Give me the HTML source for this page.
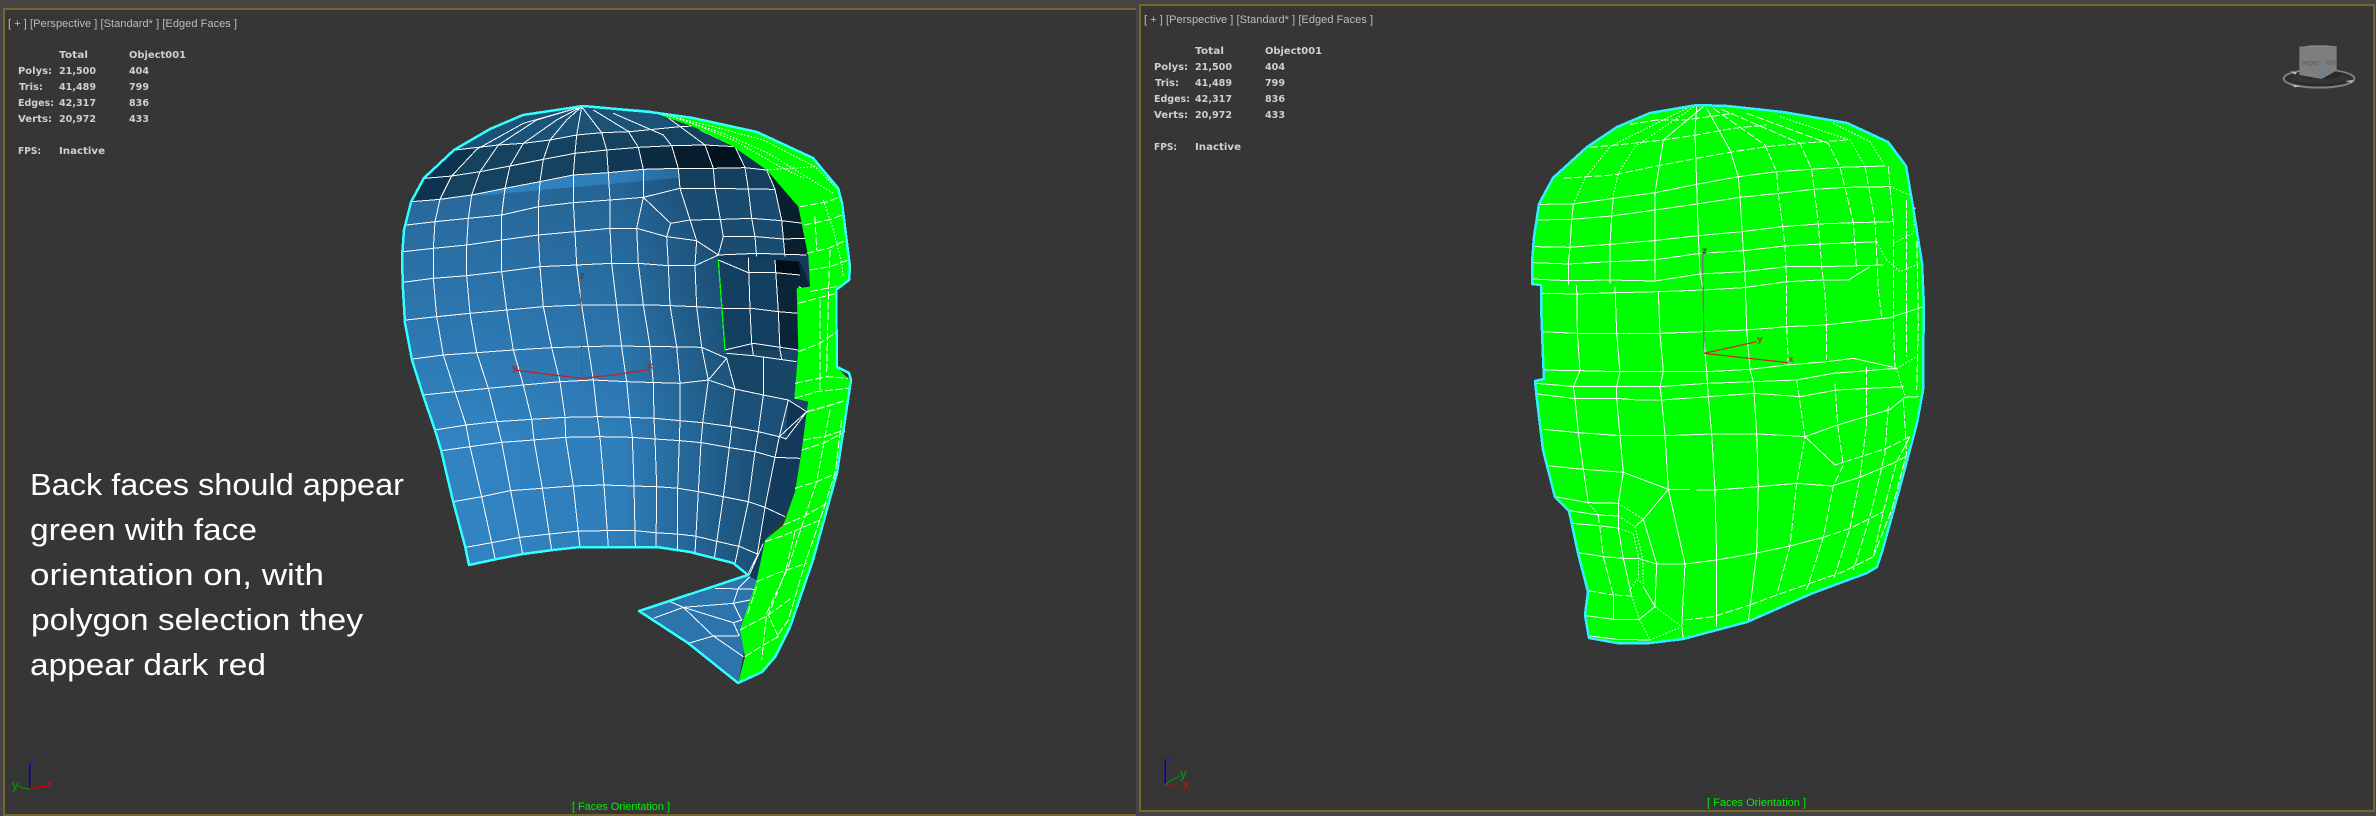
<!DOCTYPE html>
<html><head><meta charset="utf-8"><title>Face orientation</title>
<style>
html,body{margin:0;padding:0;background:#444;width:2376px;height:816px;overflow:hidden}
svg{display:block}
.h{font:11px "Liberation Sans",sans-serif;fill:#bdbdbd}
.s{font:bold 10px "DejaVu Sans",sans-serif;fill:#cfcfcf}
.a{font:31px "Liberation Sans",sans-serif;fill:#fff}
.g{font:11px "Liberation Sans",sans-serif;fill:#00f000}
.m polyline,.md polyline,.mt polyline{fill:none;stroke:#fff;stroke-width:3;shape-rendering:crispEdges}
.md polyline{stroke-dasharray:24 7}
.mt polyline{stroke-dasharray:5 5;stroke-width:3}
.t{font:bold 26px "DejaVu Sans",sans-serif}
.c{font:13px "Liberation Sans",sans-serif}
</style></head><body>
<svg width="2376" height="816" viewBox="0 0 2376 816" xmlns="http://www.w3.org/2000/svg">
<defs>
<linearGradient id="b1" gradientUnits="userSpaceOnUse" x1="300" y1="0" x2="1260" y2="0">
<stop offset="0" stop-color="#3183c2"/><stop offset=".45" stop-color="#2e7db9"/><stop offset=".72" stop-color="#215f8d"/><stop offset="1" stop-color="#15405f"/>
</linearGradient>
<linearGradient id="b2" gradientUnits="userSpaceOnUse" x1="0" y1="240" x2="0" y2="1050">
<stop offset="0" stop-color="#000" stop-opacity=".22"/><stop offset="1" stop-color="#000" stop-opacity="0"/>
</linearGradient>
</defs>
<rect width="2376" height="816" fill="#444"/>
<!-- left viewport -->
<rect x="3" y="8" width="1133" height="808" fill="#75652f"/>
<rect x="5" y="10" width="1131" height="804" fill="#363636"/>
<!-- right viewport -->
<rect x="1139" y="4" width="1236" height="808" fill="#75652f"/>
<rect x="1141" y="6" width="1232" height="804" fill="#363636"/>

<text class="h" x="8" y="27" textLength="229" lengthAdjust="spacing">[ + ] [Perspective ] [Standard* ] [Edged Faces ]</text>
<text class="h" x="1144" y="23" textLength="229" lengthAdjust="spacing">[ + ] [Perspective ] [Standard* ] [Edged Faces ]</text>

<g class="s">
<text x="59" y="58" textLength="29" lengthAdjust="spacingAndGlyphs">Total</text><text x="129" y="58" textLength="57" lengthAdjust="spacingAndGlyphs">Object001</text>
<text x="18" y="74" textLength="34" lengthAdjust="spacingAndGlyphs">Polys:</text><text x="59" y="74" textLength="37" lengthAdjust="spacingAndGlyphs">21,500</text><text x="129" y="74" textLength="20" lengthAdjust="spacingAndGlyphs">404</text>
<text x="19" y="90" textLength="24" lengthAdjust="spacingAndGlyphs">Tris:</text><text x="59" y="90" textLength="37" lengthAdjust="spacingAndGlyphs">41,489</text><text x="129" y="90" textLength="20" lengthAdjust="spacingAndGlyphs">799</text>
<text x="18" y="106" textLength="36" lengthAdjust="spacingAndGlyphs">Edges:</text><text x="59" y="106" textLength="37" lengthAdjust="spacingAndGlyphs">42,317</text><text x="129" y="106" textLength="20" lengthAdjust="spacingAndGlyphs">836</text>
<text x="18" y="122" textLength="34" lengthAdjust="spacingAndGlyphs">Verts:</text><text x="59" y="122" textLength="37" lengthAdjust="spacingAndGlyphs">20,972</text><text x="129" y="122" textLength="20" lengthAdjust="spacingAndGlyphs">433</text>
<text x="18" y="154" textLength="23" lengthAdjust="spacingAndGlyphs">FPS:</text><text x="59" y="154" textLength="46" lengthAdjust="spacingAndGlyphs">Inactive</text>
</g>
<g class="s" transform="translate(1136,-4)">
<text x="59" y="58" textLength="29" lengthAdjust="spacingAndGlyphs">Total</text><text x="129" y="58" textLength="57" lengthAdjust="spacingAndGlyphs">Object001</text>
<text x="18" y="74" textLength="34" lengthAdjust="spacingAndGlyphs">Polys:</text><text x="59" y="74" textLength="37" lengthAdjust="spacingAndGlyphs">21,500</text><text x="129" y="74" textLength="20" lengthAdjust="spacingAndGlyphs">404</text>
<text x="19" y="90" textLength="24" lengthAdjust="spacingAndGlyphs">Tris:</text><text x="59" y="90" textLength="37" lengthAdjust="spacingAndGlyphs">41,489</text><text x="129" y="90" textLength="20" lengthAdjust="spacingAndGlyphs">799</text>
<text x="18" y="106" textLength="36" lengthAdjust="spacingAndGlyphs">Edges:</text><text x="59" y="106" textLength="37" lengthAdjust="spacingAndGlyphs">42,317</text><text x="129" y="106" textLength="20" lengthAdjust="spacingAndGlyphs">836</text>
<text x="18" y="122" textLength="34" lengthAdjust="spacingAndGlyphs">Verts:</text><text x="59" y="122" textLength="37" lengthAdjust="spacingAndGlyphs">20,972</text><text x="129" y="122" textLength="20" lengthAdjust="spacingAndGlyphs">433</text>
<text x="18" y="154" textLength="23" lengthAdjust="spacingAndGlyphs">FPS:</text><text x="59" y="154" textLength="46" lengthAdjust="spacingAndGlyphs">Inactive</text>
</g>

<text class="a" x="30" y="495" textLength="374" lengthAdjust="spacingAndGlyphs">Back faces should appear</text>
<text class="a" x="30" y="540" textLength="227" lengthAdjust="spacingAndGlyphs">green with face</text>
<text class="a" x="30" y="585" textLength="294" lengthAdjust="spacingAndGlyphs">orientation on, with</text>
<text class="a" x="31" y="630" textLength="332" lengthAdjust="spacingAndGlyphs">polygon selection they</text>
<text class="a" x="30" y="675" textLength="236" lengthAdjust="spacingAndGlyphs">appear dark red</text>

<text class="g" x="572" y="810" textLength="98" lengthAdjust="spacing">[ Faces Orientation ]</text>
<text class="g" x="1707" y="806" textLength="99" lengthAdjust="spacing">[ Faces Orientation ]</text>

<!-- LEFT HEAD -->
<g transform="translate(380,90) scale(.33333)">
<polygon fill="url(#b1)" points="610,48 430,75 330,118 222,180 132,265 92,335 72,420 66,500 68,600 75,700 95,810 130,915 165,1020 185,1080 220,1235 255,1370 268,1427 350,1408 430,1392 520,1380 600,1372 700,1370 830,1372 930,1388 1060,1420 1105,1455 1130,1470 1280,1000 1290,500 1160,200 810,60"/>
<polygon fill="url(#b2)" points="92,335 72,420 66,500 68,600 75,700 95,810 130,915 165,1020 1280,1020 1290,240 1160,240"/>
<!-- flap -->
<polygon fill="#2c74ac" points="1105,1455 778,1562 925,1660 1075,1777 1130,1470"/>
<!-- top bands -->
<polygon fill="#14425f" points="610,48 430,75 330,118 222,180 132,265 95,335 180,328 275,315 375,295 480,275 580,255 685,248 790,238 895,235 1160,240 1060,170 940,110 810,65"/>
<polygon fill="#1b5278" points="610,48 430,75 330,118 222,180 355,165 430,160 510,150 590,135 665,128 750,125 900,110 810,65"/>
<polygon fill="#0e3350" points="222,180 132,265 95,335 180,328 215,258 290,178"/>
<polygon fill="#123754" points="680,180 775,172 790,238 685,248"/>
<polygon fill="#0c2a42" points="775,172 875,167 895,235 790,238"/>
<polygon fill="#071c2d" points="875,167 975,165 995,235 895,235"/>
<polygon fill="#03131e" points="975,165 1065,170 1095,233 995,235"/>
<polygon fill="#0e3250" points="1065,170 1160,240 1095,233"/>
<polygon fill="#153f5f" points="895,235 1160,240 1185,298 900,295"/>
<polygon fill="#1a4b70" points="900,295 1185,298 1205,390 1215,495 1015,495 950,452"/>
<polygon fill="#08202f" points="1160,240 1255,350 1285,500 1215,495 1205,390 1185,298"/>
<polygon fill="#12385a" points="1015,495 1285,495 1290,590 1250,595 1255,780 1035,780 1015,510"/>
<polygon fill="#134060" points="1015,510 1185,510 1195,665 1200,780 1120,760 1035,780"/>
<polygon fill="#0a2438" points="1185,510 1260,515 1290,590 1250,595 1255,780 1200,780"/>
<polygon fill="#030d18" points="1187,510 1255,515 1262,555 1190,550"/>
<polygon fill="#174566" points="1035,780 1255,780 1245,925 1285,935 1280,960 1225,930 1065,897 1040,805"/>
<polygon fill="#1c5078" points="1065,897 1225,930 1218,1045 1198,1040 1050,1010"/>
<polygon fill="#0f3352" points="1225,930 1280,960 1265,1080 1218,1045"/>
<g class="m">
<polyline points="605,50 560,90 510,150 490,208 480,275 475,350 475,435 480,530 490,650 515,773 540,875 555,980"/>
<polyline points="605,50 530,90 430,160 390,228 375,295 365,375 365,450 365,545 380,660 400,780 430,885 455,988"/>
<polyline points="605,50 470,90 355,165 300,245 275,315 265,385 260,465 260,557 270,670 290,788 325,895 350,995"/>
<polyline points="605,50 430,100 290,178 215,258 180,328 165,395 160,475 160,565 170,680 190,795 225,905 258,1005"/>
<polyline points="605,50 590,135 585,190 580,255 580,338 585,425 590,525 605,645 625,773 640,870 652,980"/>
<polyline points="605,50 665,128 680,180 685,248 690,330 690,415 695,520 710,645 725,770 740,875 750,982"/>
<polyline points="640,60 745,124 775,172 790,238 790,322 770,415 775,520 790,645 810,768 820,880 822,985"/>
<polyline points="700,70 850,135 875,167 895,235 900,295 950,452 945,527 950,650 965,772 985,870 968,998"/>
<polyline points="790,322 872,400 860,440 865,527 870,645 890,770 900,880 900,992"/>
<polyline points="872,400 930,390 1030,388 1115,385 1205,392 1270,400"/>
<polyline points="860,80 975,165 1000,235 1005,295 1030,440 1015,495"/>
<polyline points="960,120 1065,170 1095,233 1105,297 1115,385 1125,440 1130,500"/>
<polyline points="1160,240 1185,298 1205,390 1215,500"/>
<polyline points="225,180 355,165 430,160 510,150 590,135 665,128 750,125 900,110 940,108"/>
<polyline points="135,265 215,258 300,245 390,228 490,208 585,190 680,180 775,172 875,167 975,165 1065,170"/>
<polyline points="95,335 180,328 275,315 375,295 480,275 580,255 685,248 790,238 895,235 1000,235 1095,233 1160,240"/>
<polyline points="80,405 165,395 265,385 365,375 475,350 580,338 690,330 790,322 900,295 1000,295 1105,297 1185,298"/>
<polyline points="70,485 160,475 260,465 365,450 475,435 585,425 690,415 770,415 860,440 950,452 1015,495"/>
<polyline points="68,577 160,565 260,557 365,545 480,530 590,525 695,520 775,520 865,527 945,527 1015,495"/>
<polyline points="78,690 170,680 270,670 380,660 490,650 605,645 710,645 820,645 950,650 1030,655 1115,655 1195,665 1255,670"/>
<polyline points="98,807 190,795 290,788 400,780 515,773 605,770 700,768 860,770 965,772 1040,805"/>
<polyline points="130,915 225,905 325,895 430,885 540,875 640,870 740,875 900,880 985,870 1065,897 1150,915 1225,930 1280,965"/>
<polyline points="985,870 1040,805 1065,897 1050,1010"/>
<polyline points="1030,440 1130,440 1210,447 1275,445"/>
<polyline points="1015,495 1130,490 1280,495"/>
<polyline points="1015,510 1105,548 1185,548 1260,555"/>
<polyline points="1105,503 1110,655 1115,760 1120,795"/>
<polyline points="1185,510 1195,665 1200,780 1205,808"/>
<polyline points="1035,780 1120,760 1255,780"/>
<polyline points="1040,790 1120,797 1250,815"/>
<polyline points="1150,800 1150,915 1135,1025"/>
<polyline points="1225,930 1198,1040 1280,965"/>
<polyline points="1255,590 1290,605"/>
</g>
<polyline points="1015,510 1035,780" fill="none" stroke="#0f0" stroke-width="4" shape-rendering="crispEdges"/>
<!-- gizmo -->
<polyline points="603,570 605,865" fill="none" stroke="#5f5f5f" stroke-width="3" shape-rendering="crispEdges"/>
<polyline points="405,840 520,855 605,865 700,855 810,838" fill="none" stroke="#c41f1f" stroke-width="3.5"/>
<text class="t" x="598" y="566" fill="#444">z</text>
<text class="t" x="396" y="842" fill="#a52a2a">y</text>
<text class="t" x="802" y="836" fill="#a52a2a">x</text>
<!-- green strip -->
<polygon fill="#0f0" points="810,65 940,85 1130,125 1300,205 1375,295 1385,340 1410,530 1408,570 1368,600 1372,832 1408,870 1405,930 1370,1150 1300,1410 1230,1610 1185,1700 1145,1745 1075,1777 1095,1700 1080,1620 1130,1470 1155,1350 1210,1305 1245,1205 1265,1080 1280,965 1285,935 1243,925 1255,780 1250,595 1290,590 1285,500 1255,350 1160,240 1060,170 940,110"/>
<g class="mt">
<polyline points="830,70 1000,110 1150,150 1305,230"/>
<polyline points="860,75 1030,130 1165,190 1360,310"/>
<polyline points="900,85 1060,150 1200,230 1270,265"/>
<polyline points="1150,240 1305,230 1375,300"/>
<polyline points="1330,330 1360,420 1385,520 1390,560"/>
</g>
<g class="md">
<polyline points="1260,350 1345,335 1380,320"/>
<polyline points="1272,405 1345,390 1388,375"/>
<polyline points="1280,490 1345,475 1400,450"/>
<polyline points="1290,540 1350,530 1405,510"/>
<polyline points="1290,605 1340,595 1370,590"/>
<polyline points="1255,640 1330,620 1370,610"/>
<polyline points="1255,785 1320,760 1370,725"/>
<polyline points="1245,880 1340,860 1405,865"/>
<polyline points="1245,925 1310,905 1405,895"/>
<polyline points="1320,630 1320,900"/>
<polyline points="1350,480 1345,620 1340,850"/>
<polyline points="1305,380 1310,480"/>
<polyline points="1280,965 1340,950 1400,930"/>
<polyline points="1270,1050 1330,1040 1395,1020"/>
</g>
</g>
<g transform="translate(380,400) scale(.33333)">
<polygon fill="#133a5a" points="1280,35 1265,150 1245,275 1215,350 1155,420 1130,540 1100,525 1135,460 1155,322 1185,172 1198,110 1218,117"/>
<g class="m">
<polyline points="165,90 258,75 350,65 455,58 555,52 655,50 750,52 825,55 900,62 968,68 1055,80 1135,95 1198,110 1218,117 1280,35"/>
<polyline points="185,152 270,140 365,127 460,120 555,112 660,110 755,112 825,117 900,122 965,128 1050,143 1125,155 1185,172 1260,175"/>
<polyline points="220,305 305,290 390,272 485,265 578,258 672,255 760,258 830,260 895,265 955,275 1030,290 1105,305 1155,322 1215,350"/>
<polyline points="258,442 335,428 420,412 510,402 598,393 685,392 765,392 825,398 890,402 945,408 1015,425 1080,440 1132,462"/>
<polyline points="258,75 270,140 305,290 345,475"/>
<polyline points="350,65 365,127 392,272 428,462"/>
<polyline points="455,58 462,120 487,265 515,450"/>
<polyline points="555,52 557,112 580,258 600,442"/>
<polyline points="652,50 660,110 672,255 685,440"/>
<polyline points="750,52 757,112 762,258 766,440"/>
<polyline points="822,55 825,117 830,260 828,442"/>
<polyline points="900,62 898,122 893,265 892,450"/>
<polyline points="968,68 963,128 955,275 945,460"/>
<polyline points="1055,80 1048,143 1030,290 1003,475"/>
<polyline points="1135,95 1125,155 1105,305 1065,490"/>
<polyline points="1198,110 1185,172 1155,322 1132,462"/>
<polyline points="1135,460 1100,530"/>
<polyline points="1150,430 1108,525"/>
<polyline points="870,605 910,622 1060,668"/>
<polyline points="820,655 910,622 1060,610 1110,600"/>
<polyline points="910,622 1000,708 1090,770"/>
<polyline points="925,730 1000,708 1075,708"/>
<polyline points="1060,610 1085,660 1060,668 1078,708"/>
<polyline points="1005,565 1125,568"/>
<polyline points="1110,530 1075,565 1060,610"/>
</g>
<g class="md">
<polyline points="1280,35 1350,15 1400,0"/>
<polyline points="1265,150 1330,130 1395,95"/>
<polyline points="1245,265 1310,245 1370,220"/>
<polyline points="1210,375 1270,350 1340,310"/>
<polyline points="1155,425 1215,405 1320,360"/>
<polyline points="1130,545 1190,520 1280,490"/>
<polyline points="1080,690 1165,645 1240,590"/>
<polyline points="1095,770 1150,735 1195,710"/>
<polyline points="1350,30 1310,245 1275,350 1225,500 1160,640 1145,780"/>
<polyline points="1385,60 1365,220 1320,360 1275,490 1225,660 1190,710"/>
<polyline points="1245,395 1215,520 1165,645 1195,710"/>
<polyline points="1130,560 1100,650"/>
</g>
</g>
<polygon fill="none" stroke="#3ff" stroke-width="2.5" stroke-linejoin="round" shape-rendering="crispEdges" points="583,106 523,115 490,129 454,150 424,178 411,202 404,230 402,257 403,290 405,323 412,360 423,395 435,430 441,450 453,501 465,546 469,565 497,559 523,554 553,550 580,547 613,547 657,547 690,552 733,563 748,575 639,611 688,643 738,683 762,672 775,657 790,627 813,560 837,473 848,400 851,380 849,373 837,367 836,290 849,280 850,267 842,203 838,188 813,158 757,132 693,118 650,112"/>

<!-- RIGHT HEAD -->
<g transform="translate(1500,90) scale(.33333)">
<polygon fill="#0f0" points="590,45 450,68 350,110 260,170 160,265 118,343 103,440 97,520 95,583 123,585 123,640 130,800 133,868 105,873 110,930 130,1080 165,1220 207,1262 235,1390 265,1505 255,1575 268,1645 350,1658 450,1658 550,1648 740,1595 940,1508 1100,1450 1130,1432 1145,1385 1200,1190 1250,1000 1268,900 1270,810 1272,650 1265,520 1240,350 1218,228 1165,155 1040,100 850,65 680,48"/>
<g class="m">
<polyline points="118,343 220,342 340,325 465,308 590,283 715,260 830,245 930,238 1020,232 1155,228"/>
<polyline points="113,390 215,388 335,378 465,360 590,342 720,322 835,310 940,298 1035,292 1170,290"/>
<polyline points="105,470 210,472 330,463 460,452 595,437 725,425 845,410 955,402 1060,398 1180,395"/>
<polyline points="100,518 205,522 330,515 460,510 600,490 730,482 855,468 965,462 1130,455"/>
<polyline points="97,567 205,572 330,570 465,573 600,552 730,545 860,530 960,530 1150,525"/>
<polyline points="125,610 230,612 345,608 475,605 610,600 730,593 860,575 960,570 1045,570 1110,530"/>
<polyline points="125,725 232,730 350,730 480,730 610,725 740,720 860,710 975,705 1170,683 1270,650"/>
<polyline points="130,840 240,842 360,845 490,845 620,845 750,838 860,825 980,815 1060,805 1180,832"/>
<polyline points="110,880 225,890 350,890 480,890 620,880 760,875 890,870 1000,850 1190,835"/>
<polyline points="110,912 220,925 350,925 415,930 485,930 625,920 765,910 900,920 1010,900 1210,890"/>
<polyline points="130,1018 235,1028 360,1037 495,1037 635,1032 775,1032 890,1038 915,1040 1013,1005 1170,958 1215,922 1255,920"/>
<polyline points="140,1127 250,1138 370,1147 505,1198 570,1198"/>
<polyline points="590,1200 645,1200 775,1190 890,1180 995,1188 1080,1162 1190,1115"/>
<polyline points="165,1220 265,1238 355,1240"/>
<polyline points="210,1262 295,1275 355,1278"/>
<polyline points="215,1300 295,1307 360,1315"/>
<polyline points="235,1388 310,1400 370,1405 415,1405 470,1422 555,1422"/>
<polyline points="555,1422 650,1410 765,1390 870,1368 970,1342"/>
<polyline points="258,1577 340,1588 418,1588 465,1550"/>
<polyline points="270,1638 350,1648 450,1650"/>
<polyline points="1005,1125 915,1040"/>
<polyline points="205,585 205,522 210,472 215,388 220,342"/>
<polyline points="330,580 330,515 330,463 335,378 340,325"/>
<polyline points="230,585 232,730 240,842 220,890 225,925 235,1028 250,1138 265,1238"/>
<polyline points="345,590 350,730 360,845 350,890 350,925 360,1037 370,1147 355,1240 355,1315 370,1405 395,1518"/>
<polyline points="465,570 465,360 465,308 490,150 610,50"/>
<polyline points="475,605 480,730 490,845 480,890 485,930 495,1037 505,1198"/>
<polyline points="505,1198 430,1288 405,1310"/>
<polyline points="505,1198 555,1422 545,1610 550,1648"/>
<polyline points="590,45 585,130 590,283 595,437 600,552 610,600 610,725 620,845 625,920 635,1032 645,1200 650,1410 650,1610"/>
<polyline points="620,55 690,180 715,260 720,322 730,482 735,550 740,720 750,838 760,875 770,1032 775,1190 770,1390 745,1595"/>
<polyline points="430,1288 470,1422 465,1550 430,1490"/>
<polyline points="340,1515 340,1588"/>
</g>
<g class="mt">
<polyline points="590,45 405,170 355,250 338,325"/>
<polyline points="560,55 330,170 255,265 220,342"/>
<polyline points="840,80 1050,150 1095,228"/>
<polyline points="1000,100 1110,155 1155,228"/>
<polyline points="265,1238 295,1275"/>
<polyline points="355,1240 430,1288"/>
<polyline points="355,1278 405,1310 428,1405 430,1480 410,1470 390,1500 395,1518"/>
<polyline points="465,1550 545,1610"/>
<polyline points="450,1650 545,1610"/>
<polyline points="418,1588 450,1650"/>
<polyline points="395,1518 418,1588"/>
<polyline points="355,1315 400,1330 415,1400 415,1470"/>
<polyline points="1130,455 1160,510 1200,545 1260,520"/>
<polyline points="1180,460 1240,430 1245,350"/>
<polyline points="1190,835 1215,920"/>
<polyline points="1190,835 1250,800"/>
<polyline points="1170,290 1230,315"/>
</g>
<g class="md">
<polyline points="270,172 350,165 490,150 590,135 700,115 800,105"/>
<polyline points="390,103 470,90 555,90 700,70"/>
<polyline points="190,265 340,255 470,228 590,205 700,185 800,170 900,160 1040,150"/>
<polyline points="640,55 795,165 830,245 835,310 848,410 855,468 860,570 860,710 865,820"/>
<polyline points="665,58 900,160 935,238 955,402 965,530 975,610 980,705 980,810"/>
<polyline points="740,70 985,160 1020,232 1035,292 1060,398 1070,540"/>
<polyline points="1095,228 1125,395 1135,600 1145,680"/>
<polyline points="1165,230 1170,290 1180,395 1180,690 1185,840"/>
<polyline points="1220,330 1220,620 1220,800"/>
<polyline points="1250,420 1255,700 1250,900"/>
<polyline points="890,870 915,1040 890,1180 870,1368 830,1515"/>
<polyline points="1005,880 1013,1005 1030,1125 1000,1188 970,1342 920,1500"/>
<polyline points="1100,830 1100,1000 1080,1162 1050,1315 1000,1470"/>
<polyline points="1165,950 1155,1090 1110,1280 1060,1440"/>
<polyline points="1210,930 1220,1090 1175,1260 1120,1400"/>
<polyline points="1230,1040 1190,1115 1150,1265 1120,1400"/>
<polyline points="750,1545 830,1515 930,1480 1030,1445 1120,1400"/>
<polyline points="1005,1125 1160,1075 1230,1040"/>
<polyline points="995,1188 1080,1162 1190,1115 1225,1095"/>
<polyline points="970,1342 1050,1315 1150,1265"/>
<polyline points="555,1590 640,1580 750,1545"/>
<polyline points="310,1400 340,1515 395,1518"/>
<polyline points="265,1502 340,1515"/>
<polyline points="295,1275 310,1400"/>
</g>
<polyline points="608,490 612,790" fill="none" stroke="#777" stroke-width="4" shape-rendering="crispEdges"/>
<polyline points="770,755 612,790 865,818" fill="none" stroke="#e01530" stroke-width="3.5"/>
<text class="t" x="606" y="490" fill="#444">z</text>
<text class="t" x="771" y="756" fill="#a5481a">y</text>
<text class="t" x="864" y="816" fill="#a5481a">x</text>
</g>
<polygon fill="none" stroke="#3ef" stroke-width="2.5" stroke-linejoin="round" shape-rendering="crispEdges" points="1697,105 1650,113 1617,127 1587,147 1553,178 1539,204 1534,237 1532,263 1532,284 1541,285 1541,303 1543,357 1544,379 1535,381 1537,400 1543,450 1555,497 1569,511 1578,553 1588,592 1585,615 1589,638 1617,643 1650,643 1683,639 1747,622 1813,593 1867,573 1877,567 1882,552 1900,487 1917,423 1923,390 1923,360 1924,307 1922,263 1913,207 1906,166 1888,142 1847,123 1783,112 1727,106"/>

<!-- corner axes -->
<g fill="none" stroke-width="1.5" shape-rendering="crispEdges">
<line x1="29.5" y1="763" x2="29.5" y2="789" stroke="#0000c8"/>
<polyline points="30,789 38,787 47,786" stroke="#c80000"/>
<polyline points="30,789 23,788 18,786" stroke="#008a00"/>
<line x1="1165" y1="759" x2="1165" y2="785" stroke="#0000c8"/>
<polyline points="1165,785 1180,786" stroke="#c80000"/>
<polyline points="1165,785 1172,780 1180,776" stroke="#008a00"/>
</g>
<text class="c" x="29" y="766" fill="#1a1ae0">z</text>
<text class="c" x="46" y="788" fill="#c81010">x</text>
<text class="c" x="12" y="789" fill="#0a9a0a">y</text>
<text class="c" x="1166" y="762" fill="#1a1ae0">z</text>
<text class="c" x="1183" y="789" fill="#c81010">x</text>
<text class="c" x="1180" y="778" fill="#0a9a0a">y</text>

<!-- nav cube -->
<g transform="translate(2240,0) scale(.33333)">
<ellipse cx="237" cy="236" rx="106" ry="27" fill="#333" stroke="#7d8286" stroke-width="6"/>
<ellipse cx="237" cy="235" rx="95" ry="20" fill="none" stroke="#2c2c2c" stroke-width="8"/>
<ellipse cx="240" cy="226" rx="60" ry="12" fill="#2a2a2a"/>
<polygon fill="#7e7e7e" points="178,140 290,138 290,212 245,237 178,225"/>
<polygon fill="#8a8a8a" points="210,136 262,136 290,140 178,142"/>
<polygon fill="#767f85" points="235,165 258,160 260,225 245,235 235,225"/>
<text x="186" y="197" style="font:20px 'Liberation Sans',sans-serif" fill="#555" textLength="52" lengthAdjust="spacingAndGlyphs">FRONT</text>
<text x="258" y="195" style="font:20px 'Liberation Sans',sans-serif" fill="#555" textLength="28" lengthAdjust="spacingAndGlyphs">RIGHT</text>
<polygon fill="#b9bdbf" points="150,213 172,218 165,224"/>
<polygon fill="#b9bdbf" points="315,243 340,240 335,248"/>
<polygon fill="#b9bdbf" points="155,255 185,258 165,262"/>
</g>
</svg>
</body></html>
